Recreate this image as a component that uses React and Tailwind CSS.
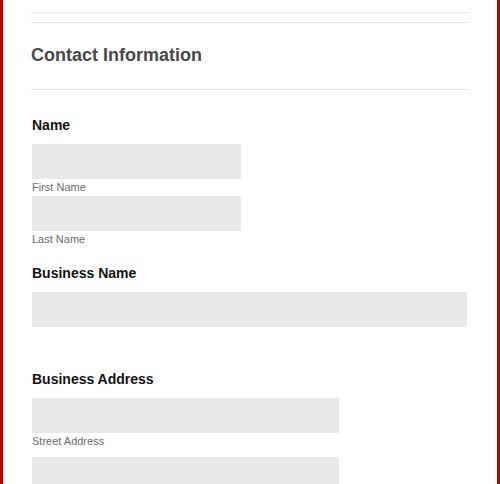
const Field = ({ width, sub, className = "" }) => (
    <div className={className}>
        <div className={`h-[35px] bg-[#e8e8e8] ml-px ${width}`}></div>
        {sub && <p className="mt-px ml-px text-[11px] leading-[14px] text-[#6e6a6a]">{sub}</p>}
    </div>
)

const Label = ({ children, className = "" }) => (
    <h3 className={`text-[14px] leading-[17px] font-bold text-[#111] ml-px ${className}`}>{children}</h3>
)

const App = () => {
    return (
        <div className="h-[484px] overflow-hidden bg-white border-x-[3px] border-[#c30000] font-['Liberation_Sans',Arial,sans-serif]">
            <div className="pl-[28px] pr-[28px]">
                <div className="mt-[12px] h-px bg-[#e4e4e4]"></div>
                <div className="mt-[9px] h-px bg-[#e4e4e4]"></div>

                <h2 className="mt-[20px] text-[18px] leading-[24px] font-bold text-[#4b4747]">Contact Information</h2>
                <div className="mt-[22px] h-px bg-[#e6e6e6]"></div>

                <Label className="mt-[27px]">Name</Label>
                <Field width="w-[209px]" sub="First Name" className="mt-[10px]" />
                <Field width="w-[209px]" sub="Last Name" className="mt-[2px]" />

                <Label className="mt-[19px]">Business Name</Label>
                <Field width="w-[435px]" className="mt-[10px]" />

                <Label className="mt-[44px]">Business Address</Label>
                <Field width="w-[307px]" sub="Street Address" className="mt-[10px]" />
                <Field width="w-[307px]" className="mt-[9px]" />
            </div>
        </div>
    )
}

export default App
